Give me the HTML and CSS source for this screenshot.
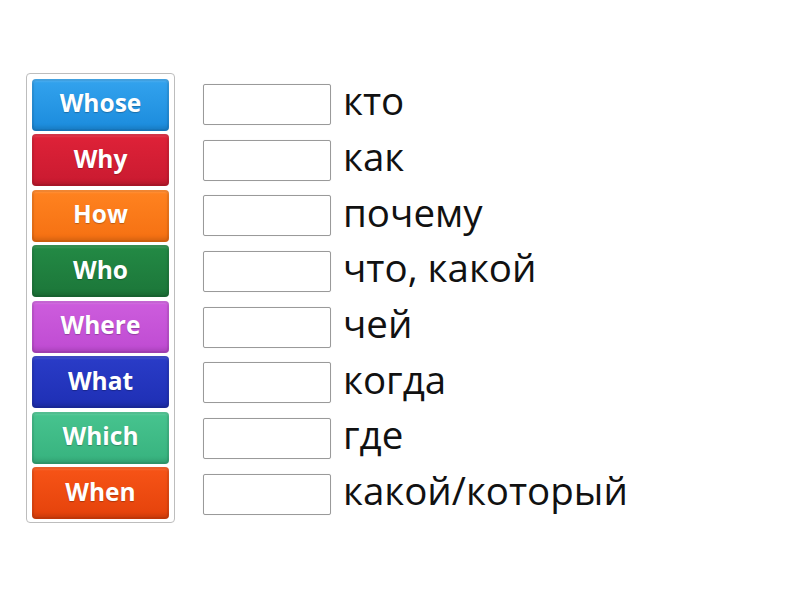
FILE: index.html
```html
<!DOCTYPE html>
<html>
<head>
<meta charset="utf-8">
<link rel="stylesheet" href="styles.css">
</head>
<body>
<div class="page">
  <div class="tiles">
    <div class="tile c1">Whose</div>
    <div class="tile c2">Why</div>
    <div class="tile c3">How</div>
    <div class="tile c4">Who</div>
    <div class="tile c5">Where</div>
    <div class="tile c6">What</div>
    <div class="tile c7">Which</div>
    <div class="tile c8">When</div>
  </div>
  <div class="rows">
    <div class="row"><div class="box"></div><div class="label">кто</div></div>
    <div class="row"><div class="box"></div><div class="label">как</div></div>
    <div class="row"><div class="box"></div><div class="label">почему</div></div>
    <div class="row"><div class="box"></div><div class="label">что, какой</div></div>
    <div class="row"><div class="box"></div><div class="label">чей</div></div>
    <div class="row"><div class="box"></div><div class="label">когда</div></div>
    <div class="row"><div class="box"></div><div class="label">где</div></div>
    <div class="row"><div class="box"></div><div class="label">какой/который</div></div>
  </div>
</div>
</body>
</html>
```
FILE: styles.css
```css
html, body {
  margin: 0;
  padding: 0;
  background: #fff;
  font-family: "Open Sans", "Liberation Sans", sans-serif;
}
.page {
  display: flex;
  align-items: flex-start;
  padding: 73px 0 0 26px;
}
.tiles {
  width: 137px;
  padding: 5px 5px 3px 5px;
  border: 1px solid #bdbdbd;
  border-radius: 4px;
  display: flex;
  flex-direction: column;
  gap: 3.9px;
}
.tile {
  height: 51.6px;
  padding-bottom: 4px;
  border-radius: 4px;
  color: #fff;
  font-weight: 700;
  font-size: 24.5px;
  display: flex;
  align-items: center;
  justify-content: center;
  text-shadow: 0 1px 1px rgba(0,0,0,0.25);
  box-shadow: inset 0 0 0 2px rgba(0,0,0,0.06), inset 0 -4px 4px rgba(0,0,0,0.12), inset 0 3px 2px rgba(255,255,255,0.10);
  box-sizing: border-box;
}
.c1 { background: linear-gradient(#33a3ee, #1b8bdc); }
.c2 { background: linear-gradient(#df2238, #c91a30); }
.c3 { background: linear-gradient(#ff8320, #f57012); }
.c4 { background: linear-gradient(#238a45, #1c7639); }
.c5 { background: linear-gradient(#cd5ddd, #bf4bd2); }
.c6 { background: linear-gradient(#2a3cc8, #1e2fb4); }
.c7 { background: linear-gradient(#47c48f, #37b27e); }
.c8 { background: linear-gradient(#f75417, #e4420b); }
.rows {
  margin-left: 28px;
  padding-top: 11px;
  display: flex;
  flex-direction: column;
  gap: 14.7px;
}
.row {
  display: flex;
  align-items: center;
  height: 41px;
}
.box {
  width: 128px;
  height: 41px;
  box-sizing: border-box;
  border: 1px solid #9a9a9a;
  border-radius: 2px;
  box-shadow: 0 0 1px rgba(0,0,0,0.15);
  background: #fff;
}
.label {
  margin-left: 12px;
  font-size: 38.5px;
  color: #111;
  line-height: 1;
  position: relative;
  top: -4px;
}
```
